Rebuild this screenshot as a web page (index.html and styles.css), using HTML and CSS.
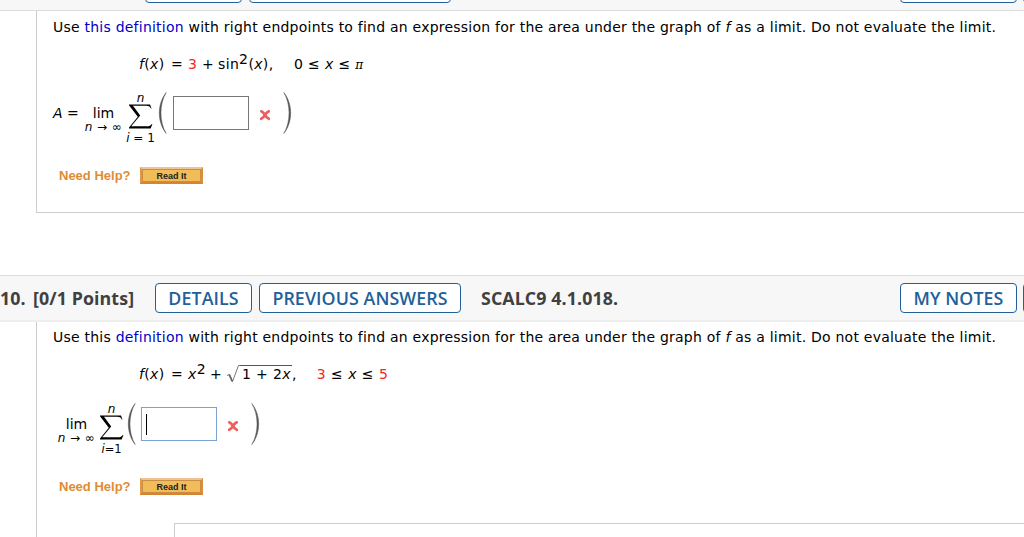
FILE: index.html
```html
<!DOCTYPE html>
<html lang="en">
<head>
  <meta charset="UTF-8">
  <title>Homework</title>
  <link rel="stylesheet" href="styles.css">
</head>
<body>
  <svg class="defs">
    <symbol id="sigma" viewBox="0 0 25 25">
      <path d="M1 .5H22L23.500 4.500H22.900C22 2.300 20.500 1.700 18 1.700H5L12.200 11.600 3.200 22.300H19C21.500 22.300 22.600 21.600 23.800 20L24.400 20.200 22.600 24.500H1V23.600L9.800 12.800 1 1.300Z"/>
    </symbol>
    <symbol id="lparen" viewBox="0 0 9 42">
      <path d="M8.200.5C-1 12-1 30 8.200 41.500C1.200 30 1.200 12 8.200.5Z" stroke-width=".5"/>
    </symbol>
    <symbol id="rparen" viewBox="0 0 9 42">
      <path d="M.8.5C10 12 10 30 .8 41.500C7.800 30 7.800 12 .8.5Z" stroke-width=".5"/>
    </symbol>
    <symbol id="wrong" viewBox="0 0 12 12">
      <path d="M2.300 2.300Q4.500 3.500 6 6Q7.500 8.700 9.800 9.800M9.800 2.300Q7.500 3.500 6 6Q4.500 8.700 2.200 9.800" fill="none" stroke="#ec5f5f" stroke-width="2.700" stroke-linecap="round"/>
    </symbol>
    <symbol id="root" viewBox="0 0 14 18">
      <path d="M1 10.500 3.500 9.500 6.500 16.500 12.500.5H14" fill="none" stroke="#777" stroke-width="1"/>
      <path d="M3.200 9.500 6.300 16.500" stroke="#666" stroke-width="1.800"/>
    </symbol>
  </svg>

  <div class="header header-prev">
    <span class="number"></span>
    <span class="points"></span>
    <a class="btn btn-details"></a>
    <a class="btn btn-answers"></a>
    <a class="btn btn-notes"></a>
    <a class="btn btn-ask"></a>
  </div>

  <div class="question question-first">
    <p class="prompt">Use <a>this definition</a> with right endpoints to find an expression for the area under the graph of <i>f</i> as a limit. Do not evaluate the limit.</p>
    <div class="formula">
      <span class="fx"><i>f</i>(<i>x</i>)</span><span class="eq">=</span><span class="red three">3</span><span class="plus">+</span><span class="sin">sin<sup>2</sup>(<i>x</i>),</span><span class="range">0 ≤ <i>x</i> ≤ <i class="pi">π</i></span>
    </div>
    <div class="answer">
      <div class="area"><i>A</i> =</div>
      <div class="lim"><span>lim</span><small><i>n</i> → ∞</small></div>
      <div class="sum"><small><i>n</i></small><svg class="sigma"><use href="#sigma"/></svg><small class="from"><i>i</i> = 1</small></div>
      <svg class="paren"><use href="#lparen"/></svg>
      <span class="input"></span>
      <svg class="wrong"><use href="#wrong"/></svg>
      <svg class="paren"><use href="#rparen"/></svg>
    </div>
    <div class="help"><b>Need Help?</b><a class="read">Read It</a></div>
  </div>

  <div class="header">
    <span class="number">10.</span>
    <span class="points">[0/1 Points]</span>
    <a class="btn btn-details">DETAILS</a>
    <a class="btn btn-answers">PREVIOUS ANSWERS</a>
    <span class="code">SCALC9 4.1.018.</span>
    <a class="btn btn-notes">MY NOTES</a>
    <a class="btn btn-ask"></a>
  </div>

  <div class="question question-second">
    <p class="prompt">Use this <a>definition</a> with right endpoints to find an expression for the area under the graph of <i>f</i> as a limit. Do not evaluate the limit.</p>
    <div class="formula">
      <span class="fx"><i>f</i>(<i>x</i>)</span><span class="eq">=</span><span class="square"><i>x</i><sup>2</sup></span><span class="plus">+</span><svg class="root"><use href="#root"/></svg><span class="radicand">1 + 2<i>x</i></span><span>,</span><span class="range range-second"><span class="red">3</span> ≤ <i>x</i> ≤ <span class="red">5</span></span>
    </div>
    <div class="answer answer-second">
      <div class="lim"><span>lim</span><small><i>n</i> → ∞</small></div>
      <div class="sum"><small><i>n</i></small><svg class="sigma"><use href="#sigma"/></svg><small class="from tight"><i>i</i>=1</small></div>
      <svg class="paren"><use href="#lparen"/></svg>
      <span class="input focused"><span class="caret"></span></span>
      <svg class="wrong"><use href="#wrong"/></svg>
      <svg class="paren"><use href="#rparen"/></svg>
    </div>
    <div class="help"><b>Need Help?</b><a class="read">Read It</a></div>
    <div class="panel"></div>
  </div>
</body>
</html>
```

FILE: styles.css
```css
* {
  box-sizing: border-box;
}
body {
  margin: 0;
  height: 537px;
  overflow: hidden;
  background: #fff;
  color: #000;
  font: 14px/18px "DejaVu Sans", Verdana, sans-serif;
}
.defs {
  display: none;
}
.header {
  display: flex;
  align-items: center;
  height: 47px;
  overflow: hidden;
  white-space: nowrap;
  background: #f7f7f7;
  border-top: 1px solid #dcdcdc;
  border-bottom: 2px solid #eee;
  color: #404040;
  font: bold 17.8px/28px "Open Sans", sans-serif;
  letter-spacing: .1px;
}
.header-prev {
  height: 11px;
  align-items: flex-end;
  border-top: 0;
  border-bottom: 1px solid #dcdcdc;
  padding-bottom: 7px;
}
.number {
  width: 33px;
}
.points {
  width: 122px;
}
.btn {
  flex: none;
  height: 30px;
  border: 1px solid #22609a;
  border-radius: 4px;
  background: #fff;
  color: #22609a;
  font-weight: 600;
  text-align: center;
}
.btn-details {
  width: 97px;
}
.btn-answers {
  width: 202px;
  margin-left: 7px;
}
.code {
  margin-left: 20px;
}
.btn-notes {
  width: 117px;
  margin-left: auto;
}
.btn-ask {
  width: 30px;
  margin-left: 6px;
  margin-right: -29px;
}
.header-prev .points {
  width: 112px;
}
.question {
  margin-left: 36px;
  padding-left: 16px;
  border-left: 1px solid #ccc;
}
.question-first {
  height: 202px;
  margin-bottom: 62px;
  padding-top: 7px;
  border-bottom: 1px solid #ccc;
}
.question-second {
  height: 215px;
  padding-top: 6px;
}
.prompt {
  margin: 0;
  letter-spacing: .228px;
  white-space: nowrap;
}
.prompt a {
  color: #0000c8;
}
.red {
  color: #f2281c;
}
.formula {
  display: flex;
  height: 18px;
  margin: 19px 0 0 86px;
  letter-spacing: .35px;
  white-space: nowrap;
}
.fx {
  width: 32px;
}
.eq {
  width: 17px;
}
.three {
  width: 14px;
}
.plus {
  width: 16px;
}
.square {
  width: 22px;
}
.formula sup {
  font-size: 14px;
  line-height: 0;
  vertical-align: 5px;
}
.sin {
  width: 76px;
}
.pi {
  font-family: "DejaVu Serif", serif;
  font-size: 12px;
}
.root {
  width: 14px;
  height: 18px;
}
.radicand {
  width: 52px;
  height: 18px;
  padding-left: 2px;
  border-top: 1px solid #555;
  line-height: 17px;
}
.range-second {
  margin-left: 20px;
  letter-spacing: .45px;
}
.answer {
  display: flex;
  align-items: center;
  height: 54px;
  margin-top: 13px;
}
.answer-second {
  margin: 14px 0 0 4px;
}
.area {
  width: 31px;
  white-space: nowrap;
}
.lim {
  display: flex;
  flex-direction: column;
  align-items: center;
  width: 39px;
  padding-top: 11px;
}
.answer small {
  font-size: 12px;
  line-height: 12px;
  white-space: nowrap;
}
.lim small {
  margin-top: -1px;
  letter-spacing: .45px;
}
.sum {
  display: flex;
  flex-direction: column;
  align-items: center;
  width: 25px;
  margin-left: 5px;
  padding-top: 9px;
}
.answer-second .sum {
  margin-left: 3px;
}
.sum .from {
  margin-top: 3px;
}
.sum .tight {
  font-size: 11.5px;
}
.sigma {
  width: 25px;
  height: 25px;
  flex: none;
}
.paren {
  width: 9px;
  height: 42px;
  margin-left: 5px;
  stroke: #555;
  fill: #555;
}
.answer-second .sum + .paren {
  margin-left: 3px;
}
.input {
  width: 76px;
  height: 34px;
  margin-left: 6px;
  padding: 6px 4px;
  border: 1px solid #767676;
}
.focused {
  margin-left: 5px;
  border-color: #7aa3d3;
}
.caret {
  display: block;
  width: 1px;
  height: 21px;
  background: #000;
}
.wrong {
  width: 12px;
  height: 12px;
  margin: 4px 7px 0 10px;
}
.help {
  display: flex;
  margin: 27px 0 0 6px;
}
.help b {
  width: 81px;
  color: #de8c35;
  font: bold 13px/18px "Liberation Sans", Arial, sans-serif;
}
.read {
  width: 63px;
  height: 17px;
  border: 3px solid;
  border-color: #efc397 #dc8e3b #d98330 #e29845;
  outline: 1px solid #c98d45;
  outline-offset: -3px;
  background: #f1bd59;
  color: #222;
  font: bold 9px/12px "Liberation Sans", Arial, sans-serif;
  text-align: center;
}
.panel {
  height: 20px;
  margin: 27px 0 0 121px;
  border-top: 1px solid #ccc;
  border-left: 1px solid #ccc;
}
```
